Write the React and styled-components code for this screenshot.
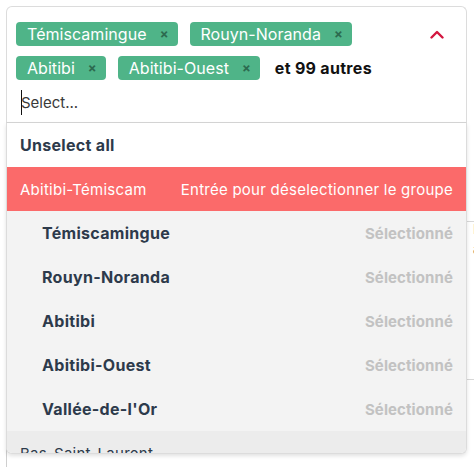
import React from "react";
import styled, { createGlobalStyle } from "styled-components";

const selected = ["Témiscamingue", "Rouyn-Noranda", "Abitibi", "Abitibi-Ouest"];
const groupOptions = [
  "Témiscamingue",
  "Rouyn-Noranda",
  "Abitibi",
  "Abitibi-Ouest",
  "Vallée-de-l'Or",
];

export default function App() {
  return (
    <Page>
      <GlobalStyle />
      <SelectBox>
        <Control>
          <Values>
            {selected.map((name) => (
              <Chip key={name}>
                <ChipLabel>{name}</ChipLabel>
                <ChipRemove>×</ChipRemove>
              </Chip>
            ))}
            <More>et 99 autres</More>
            <InputRow>
              <Placeholder>Select...</Placeholder>
            </InputRow>
          </Values>
          <Indicator>
            <svg width="14" height="9" viewBox="0 0 14 9">
              <path
                d="M1.5 7.5 L7 2 L12.5 7.5"
                fill="none"
                stroke="#d3163f"
                strokeWidth="2.4"
                strokeLinecap="round"
                strokeLinejoin="round"
              />
            </svg>
          </Indicator>
        </Control>

        <Menu>
          <UnselectRow>Unselect all</UnselectRow>
          <GroupHeader $active>
            <span>Abitibi-Témiscam</span>
            <Hint>Entrée pour déselectionner le groupe</Hint>
          </GroupHeader>
          {groupOptions.map((name) => (
            <OptionRow key={name}>
              <span>{name}</span>
              <Status>Sélectionné</Status>
            </OptionRow>
          ))}
          <GroupHeader>
            <span>Bas-Saint-Laurent</span>
          </GroupHeader>
        </Menu>
      </SelectBox>

      {/* page content sitting under the open menu */}
      <Backdrop>
        <BackRow $h={92}>
          <BackText>Région administrative</BackText>
        </BackRow>
        <BackRow $h={158} />
        <BackRow $h={55} />
        <BackRow $h={55} />
      </Backdrop>
    </Page>
  );
}

const GlobalStyle = createGlobalStyle`
  html, body {
    margin: 0;
    padding: 0;
    background: #fff;
  }
  body {
    font-family: "Inter", "Liberation Sans", sans-serif;
  }
`;

const Page = styled.div`
  position: relative;
  width: 474px;
  height: 467px;
  overflow: hidden;
  padding: 6px 0 0 6px;
  box-sizing: border-box;
`;

const SelectBox = styled.div`
  position: relative;
  z-index: 2;
  width: 461px;
`;

const Control = styled.div`
  display: flex;
  align-items: flex-start;
  border: 1px solid #dcdcdc;
  border-bottom-color: #d6d6d6;
  border-radius: 6px 6px 0 0;
  background: #fff;
  padding: 15px 0 0 9px;
  min-height: 100px;
`;

const Values = styled.div`
  flex: 1;
  display: flex;
  flex-wrap: wrap;
  align-items: center;
`;

const Chip = styled.div`
  display: flex;
  align-items: center;
  height: 24px;
  margin: 0 12px 10px 0;
  padding: 0 9px 0 11px;
  border-radius: 4px;
  background: #4fb488;
  color: #fff;
  font-size: 16px;
  letter-spacing: 0.05px;
`;

const ChipLabel = styled.span`
  line-height: 24px;
`;

const ChipRemove = styled.span`
  margin-left: 13px;
  font-size: 13px;
  font-weight: 700;
  color: #2c6a4f;
`;

const More = styled.span`
  margin: 0 0 10px 3px;
  height: 24px;
  line-height: 24px;
  font-size: 16px;
  font-weight: 700;
  letter-spacing: 0.3px;
  color: #111;
`;

const InputRow = styled.div`
  flex-basis: 100%;
  height: 24px;
  margin-bottom: 7px;
  padding-left: 5px;
  display: flex;
  align-items: center;
`;

const Placeholder = styled.span`
  position: relative;
  font-size: 15px;
  color: #3a3a3a;
  &::before {
    content: "";
    position: absolute;
    left: 0;
    top: -3px;
    bottom: -3px;
    width: 1.3px;
    background: #111;
  }
`;

const Indicator = styled.div`
  display: flex;
  align-items: center;
  height: 24px;
  padding: 0 22px 0 10px;
`;

const Menu = styled.div`
  position: absolute;
  top: 100%;
  left: 0;
  right: 0;
  height: 330px;
  overflow: hidden;
  background: #fff;
  border: 1px solid #dcdcdc;
  border-top: none;
  border-radius: 0 0 6px 6px;
  box-shadow: 0 2px 4px rgba(0, 0, 0, 0.12);
`;

const Row = styled.div`
  display: flex;
  align-items: center;
  justify-content: space-between;
  height: 44px;
  box-sizing: border-box;
  font-size: 15px;
`;

const UnselectRow = styled(Row)`
  padding-left: 13px;
  font-size: 16px;
  font-weight: 700;
  letter-spacing: 0.3px;
  color: #2d3a4b;
`;

const GroupHeader = styled(Row)`
  padding: 0 13px;
  letter-spacing: 0.25px;
  background: ${(p) => (p.$active ? "#fb6a6a" : "#ececec")};
  color: ${(p) => (p.$active ? "#fff" : "#2d3a4b")};
`;

const Hint = styled.span`
  color: #fff;
`;

const OptionRow = styled(Row)`
  padding: 0 13px 0 35px;
  background: #f3f3f3;
  font-size: 16px;
  font-weight: 700;
  letter-spacing: 0.3px;
  color: #2d3a4b;
`;

const Status = styled.span`
  font-size: 15px;
  font-weight: 700;
  letter-spacing: 0.1px;
  color: #c2c2c2;
`;

const Backdrop = styled.div`
  position: absolute;
  top: 130px;
  left: 6px;
  width: 520px;
  border-left: 1px solid #cfcfcf;
  z-index: 1;
`;

const BackRow = styled.div`
  height: ${(p) => p.$h}px;
  border-bottom: 1px solid #d8d8d8;
  padding: 88px 0 0 466px;
  box-sizing: border-box;
`;

const BackText = styled.span`
  font-size: 13px;
  color: #555;
`;
